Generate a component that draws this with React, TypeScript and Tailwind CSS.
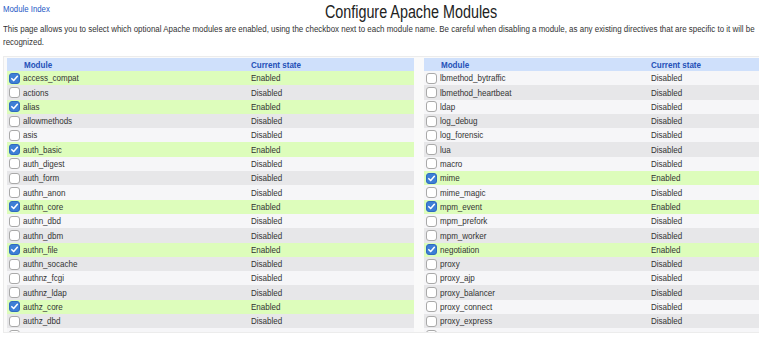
import React from "react";

type Mod = { name: string; on: boolean };

const left: Mod[] = [
  { name: "access_compat", on: true },
  { name: "actions", on: false },
  { name: "alias", on: true },
  { name: "allowmethods", on: false },
  { name: "asis", on: false },
  { name: "auth_basic", on: true },
  { name: "auth_digest", on: false },
  { name: "auth_form", on: false },
  { name: "authn_anon", on: false },
  { name: "authn_core", on: true },
  { name: "authn_dbd", on: false },
  { name: "authn_dbm", on: false },
  { name: "authn_file", on: true },
  { name: "authn_socache", on: false },
  { name: "authnz_fcgi", on: false },
  { name: "authnz_ldap", on: false },
  { name: "authz_core", on: true },
  { name: "authz_dbd", on: false },
  { name: "authz_dbm", on: false },
];

const right: Mod[] = [
  { name: "lbmethod_bytraffic", on: false },
  { name: "lbmethod_heartbeat", on: false },
  { name: "ldap", on: false },
  { name: "log_debug", on: false },
  { name: "log_forensic", on: false },
  { name: "lua", on: false },
  { name: "macro", on: false },
  { name: "mime", on: true },
  { name: "mime_magic", on: false },
  { name: "mpm_event", on: true },
  { name: "mpm_prefork", on: false },
  { name: "mpm_worker", on: false },
  { name: "negotiation", on: true },
  { name: "proxy", on: false },
  { name: "proxy_ajp", on: false },
  { name: "proxy_balancer", on: false },
  { name: "proxy_connect", on: false },
  { name: "proxy_express", on: false },
  { name: "proxy_fcgi", on: false },
];

// the page's font is a narrow grotesque; squeeze Liberation Sans to match
function T({ children }: { children: React.ReactNode }) {
  return <span className="inline-block origin-left scale-x-[0.82] whitespace-nowrap">{children}</span>;
}

function Check({ on }: { on: boolean }) {
  if (on) {
    return (
      <span className="w-[11px] h-[11px] rounded-[3px] bg-[#3d7fd6] border border-[#2f6ac0] flex items-center justify-center shrink-0">
        <svg width="9" height="9" viewBox="0 0 10 10">
          <path d="M2 5.2 L4.1 7.3 L8.2 2.6" fill="none" stroke="white" strokeWidth="1.7" strokeLinecap="round" strokeLinejoin="round" />
        </svg>
      </span>
    );
  }
  return <span className="block w-[11px] h-[11px] rounded-[3px] bg-white border border-[#a9a9a9] shrink-0" />;
}

function ModTable({ rows, stateCol }: { rows: Mod[]; stateCol: string }) {
  return (
    <div className="w-[407px] shrink-0">
      {/* header */}
      <div className="h-[13px] flex items-center bg-[#cfe0fb] text-[#2450b8] font-bold">
        <span className="w-[15px] shrink-0" />
        <span className={`${stateCol} pl-[2px]`}>
          <T>Module</T>
        </span>
        <T>Current state</T>
      </div>
      {rows.map((r, i) => (
        <div
          key={r.name}
          className={`h-[14.3px] flex items-center text-[#333] ${
            r.on ? "bg-[#ddfdbb]" : i % 2 ? "bg-[#e7e7e9]" : "bg-[#f6f6f8]"
          }`}
        >
          <span className="w-[15px] shrink-0 pl-[2px]">
            <Check on={r.on} />
          </span>
          <span className={`${stateCol} pl-[1px]`}>
            <T>{r.name}</T>
          </span>
          <T>{r.on ? "Enabled" : "Disabled"}</T>
        </div>
      ))}
    </div>
  );
}

export default function App() {
  return (
    <div className="w-[759px] h-[338px] overflow-hidden bg-white font-['Liberation_Sans',Arial,sans-serif] text-[9.8px] leading-none">
      <div className="w-[838px]">
        {/* Top: link + title */}
        <div className="w-[822px] grid grid-cols-[1fr_auto_1fr] items-start">
          <a href="#" className="pl-[3px] pt-[4px] text-[9.5px] text-[#2457c5]">
            <T>Module Index</T>
          </a>
          <h1 className="text-[17.5px] leading-[20px] pt-[2px] text-[#222] font-normal">
            <span className="inline-block origin-center scale-x-[0.82] whitespace-nowrap">Configure Apache Modules</span>
          </h1>
          <span />
        </div>

        {/* Description */}
        <p className="w-[945px] ml-[3px] origin-left scale-x-[0.82] text-[9.7px] leading-[13px] text-[#333]">
          This page allows you to select which optional Apache modules are enabled, using the checkbox next to each module name. Be careful when disabling a module, as any existing directives that are specific to it will be recognized.
        </p>

        {/* Tables */}
        <div className="mt-[8px] ml-[3px] h-[277px] overflow-hidden border border-[#ececec] bg-[#fafafa] pt-[1px] px-[3px] flex gap-[10px]">
          <ModTable rows={left} stateCol="w-[229px] shrink-0" />
          <ModTable rows={right} stateCol="w-[212px] shrink-0" />
        </div>
      </div>
    </div>
  );
}
